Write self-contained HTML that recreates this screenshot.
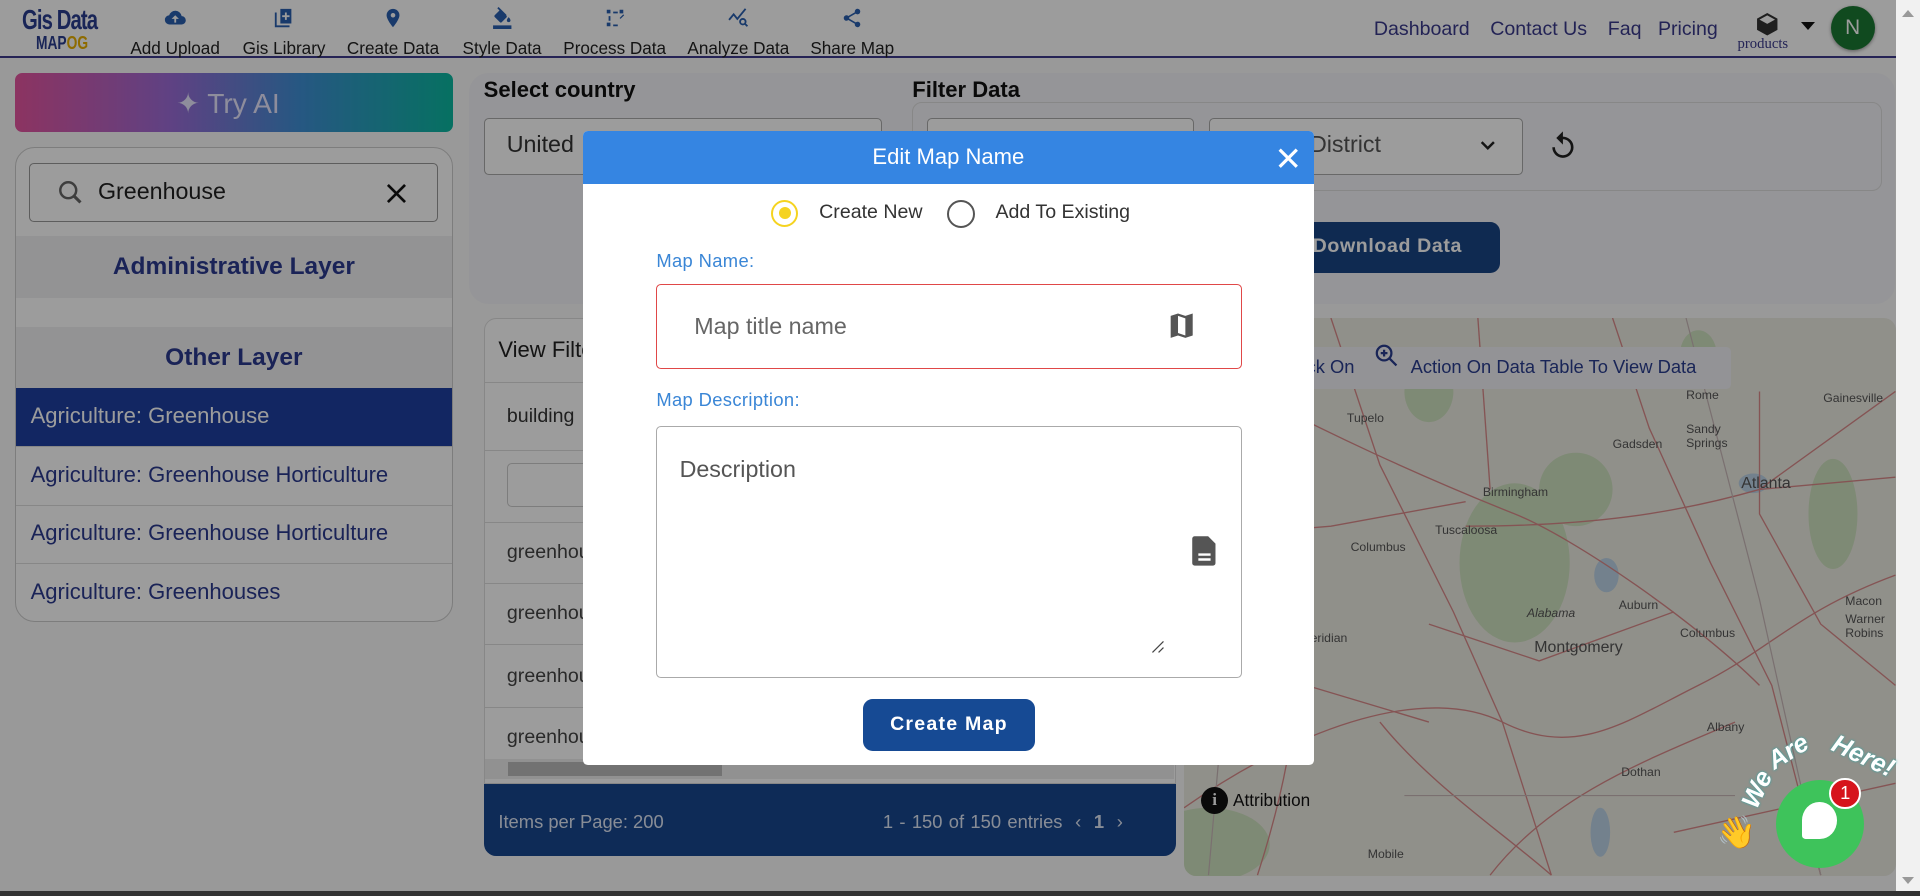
<!DOCTYPE html>
<html><head><meta charset="utf-8">
<style>
*{box-sizing:border-box;margin:0;padding:0}
html,body{width:1920px;height:896px;overflow:hidden;background:#fff;font-family:"Liberation Sans",sans-serif}
#w{zoom:1.22449;width:1568px;height:732px;position:relative;overflow:hidden;background:#fafafa}
.a{position:absolute}
.nav{font-size:14px;color:#222;text-align:center}
.nav span{display:block}
.item{position:absolute;left:13px;width:356px;height:48px;border-bottom:1px solid #ddd;color:#2b3a8f;font-size:18px;padding:12px 12px}
.row{position:absolute;left:396px;width:80px;height:50px;border-bottom:1px solid #ddd;font-size:16px;color:#444;padding:15px 18px}
.city{position:absolute;font-size:10px;color:#555}
.wh{position:absolute;font-size:21px;font-weight:bold;color:#fff;font-style:italic;text-shadow:0 0 2px #2aa;white-space:nowrap;transform-origin:left bottom}
</style></head><body><div id="w">
<!-- header -->
<div class="a" style="left:0;top:0;width:1548px;height:47px;background:#fff;border-bottom:2px solid #3d3a8c"></div>
<div class="a" style="left:18px;top:3px;font-size:23px;font-weight:bold;color:#2a3d8f;letter-spacing:-1px;transform:scaleX(.72);transform-origin:left">Gis Data</div>
<div class="a" style="left:29px;top:26px;font-size:15px;font-weight:bold;color:#2a3d8f;transform:scaleX(.75);transform-origin:left">MAP<span style="color:#e8b000">OG</span></div>
<div class="a nav" style="left:104px;top:6px;width:78px"><svg width="20" height="18" viewBox="0 0 24 24"><path fill="#2a5fb0" d="M19 10a7 7 0 0 0-13.6-1A5 5 0 0 0 6 19h13a4.5 4.5 0 0 0 0-9zm-6 3v4h-2v-4H8l4-4 4 4z"/></svg><span style="margin-top:3px">Add Upload</span></div>
<div class="a nav" style="left:194px;top:6px;width:76px"><svg width="18" height="18" viewBox="0 0 24 24"><path fill="#2a5fb0" d="M4 6H2v16h16v-2H4zm16-4H8v16h12zm-2 9h-3v3h-2v-3h-3V9h3V6h2v3h3z"/></svg><span style="margin-top:3px">Gis Library</span></div>
<div class="a nav" style="left:281px;top:6px;width:80px"><svg width="18" height="18" viewBox="0 0 24 24"><path fill="#2a5fb0" d="M12 2a7 7 0 0 0-7 7c0 5 7 13 7 13s7-8 7-13a7 7 0 0 0-7-7zm0 9.5A2.5 2.5 0 1 1 12 6.5a2.5 2.5 0 0 1 0 5z"/></svg><span style="margin-top:3px">Create Data</span></div>
<div class="a nav" style="left:375px;top:6px;width:70px"><svg width="20" height="18" viewBox="0 0 24 24"><path fill="#2a5fb0" d="M16.5 8.5 8 0 6.6 1.4 9 3.8 3.9 8.9a1.5 1.5 0 0 0 0 2.1l5.5 5.5a1.5 1.5 0 0 0 2.1 0l5-5a1.5 1.5 0 0 0 0-2.1zM19 11s-2 2.2-2 3.5a2 2 0 0 0 4 0C21 13.2 19 11 19 11zM2 20h20v4H2z"/></svg><span style="margin-top:3px">Style Data</span></div>
<div class="a nav" style="left:458px;top:6px;width:88px"><svg width="18" height="18" viewBox="0 0 24 24"><path fill="#2a5fb0" d="M3 3h4v4H3zm14 0h4v4h-4zM3 17h4v4H3zm7-12h5v2h-5zm-5 5h2v5H5zm12 2 4-4 1 1-4 4zm-7 7h5v2h-5z"/></svg><span style="margin-top:3px">Process Data</span></div>
<div class="a nav" style="left:558px;top:6px;width:90px"><svg width="20" height="18" viewBox="0 0 24 24"><path fill="none" stroke="#2a5fb0" stroke-width="2" d="M2 14l5-6 4 5 9-11M14 16a3 3 0 1 0 6 0 3 3 0 0 0-6 0m5 2 3 3"/></svg><span style="margin-top:3px">Analyze Data</span></div>
<div class="a nav" style="left:660px;top:6px;width:72px"><svg width="18" height="18" viewBox="0 0 24 24"><path fill="#2a5fb0" d="M18 16a3 3 0 0 0-2 .8L8.9 12.7a3 3 0 0 0 0-1.4L16 7.2A3 3 0 1 0 15 5a3 3 0 0 0 .1.7L8 9.8a3 3 0 1 0 0 4.4l7.1 4.1a3 3 0 1 0 2.9-2.3z"/></svg><span style="margin-top:3px">Share Map</span></div>
<div class="a" style="left:1122px;top:15px;font-size:16px;color:#3a3a8c">Dashboard</div>
<div class="a" style="left:1217px;top:15px;font-size:16px;color:#3a3a8c">Contact Us</div>
<div class="a" style="left:1313px;top:15px;font-size:16px;color:#3a3a8c">Faq</div>
<div class="a" style="left:1354px;top:15px;font-size:16px;color:#3a3a8c">Pricing</div>
<svg class="a" style="left:1433px;top:10px" width="20" height="20" viewBox="0 0 24 24"><path fill="#333" d="M12 1 2 6.5v11L12 23l10-5.5v-11zM12 3.3l7.6 4.2L12 11.7 4.4 7.5z"/></svg>
<div class="a" style="left:1419px;top:29px;font-size:12px;color:#3a3a8c;font-family:'Liberation Serif',serif">products</div>
<div class="a" style="left:1471px;top:18px;width:0;height:0;border-left:6px solid transparent;border-right:6px solid transparent;border-top:7px solid #111"></div>
<div class="a" style="left:1495px;top:5px;width:36px;height:36px;border-radius:50%;background:#1b7a33;color:#fff;font-size:17px;text-align:center;line-height:36px;box-shadow:0 1px 3px rgba(0,0,0,.4)">N</div>

<!-- left panel -->
<div class="a" style="left:12px;top:60px;width:358px;height:48px;border-radius:6px;background:linear-gradient(90deg,#e5559f,#9d6bd6 35%,#3f8fd5 65%,#0bb8a0)"></div>
<div class="a" style="left:144px;top:71px;font-size:23px;color:#e8e6ff">✦ Try AI</div>
<div class="a" style="left:12px;top:120px;width:358px;height:388px;border:1px solid #ccc;border-radius:16px;background:#fff"></div>
<div class="a" style="left:24px;top:133px;width:334px;height:48px;border:1px solid #999;border-radius:4px"></div>
<svg class="a" style="left:46px;top:145px" width="24" height="24" viewBox="0 0 24 24"><circle cx="10" cy="10" r="6.5" fill="none" stroke="#666" stroke-width="2"/><path d="M15 15l5 5" stroke="#666" stroke-width="2.5"/></svg>
<div class="a" style="left:80px;top:145px;font-size:19px;color:#222">Greenhouse</div>
<svg class="a" style="left:313px;top:147px" width="22" height="22" viewBox="0 0 22 22"><path d="M4 4l14 14M18 4 4 18" stroke="#111" stroke-width="2.2"/></svg>
<div class="a" style="left:13px;top:193px;width:356px;height:50px;background:#f0f0f2;text-align:center;font-size:20px;font-weight:bold;color:#2b3a8f;padding-top:14px">Administrative Layer</div>
<div class="a" style="left:13px;top:267px;width:356px;height:50px;background:#f0f0f2;text-align:center;font-size:20px;font-weight:bold;color:#2b3a8f;padding-top:14px">Other Layer</div>
<div class="item" style="top:317px;background:#1e3fa0;color:#fff">Agriculture: Greenhouse</div>
<div class="item" style="top:365px">Agriculture: Greenhouse Horticulture</div>
<div class="item" style="top:413px">Agriculture: Greenhouse Horticulture</div>
<div class="item" style="top:461px;border:none">Agriculture: Greenhouses</div>

<!-- filters -->
<div class="a" style="left:383px;top:60px;width:1165px;height:188px;background:#f4f4f8;border-radius:16px"></div>
<div class="a" style="left:395px;top:63px;font-size:18px;font-weight:bold;color:#111">Select country</div>
<div class="a" style="left:745px;top:63px;font-size:18px;font-weight:bold;color:#111">Filter Data</div>
<div class="a" style="left:395px;top:96px;width:325px;height:47px;border:1px solid #aaa;border-radius:4px;background:#fff;font-size:19px;color:#333;padding:10px 18px">United</div>
<div class="a" style="left:745px;top:83px;width:792px;height:73px;border:1px solid #ddd;border-radius:8px"></div>
<div class="a" style="left:757px;top:96px;width:218px;height:47px;border:1px solid #aaa;border-radius:4px;background:#fff"></div>
<div class="a" style="left:987px;top:96px;width:257px;height:47px;border:1px solid #aaa;border-radius:4px;background:#fff;font-size:19px;color:#555;padding:10px 18px 0 82px">District</div>
<svg class="a" style="left:1207px;top:111px" width="16" height="16" viewBox="0 0 16 16"><path d="M3 5l5 5 5-5" fill="none" stroke="#222" stroke-width="2"/></svg>
<svg class="a" style="left:1263px;top:106px" width="26" height="26" viewBox="0 0 24 24"><path fill="#222" d="M12 5V1L7 6l5 5V7a6 6 0 1 1-6 6H4a8 8 0 1 0 8-8z"/></svg>
<div class="a" style="left:1040px;top:181px;width:185px;height:42px;border-radius:8px;background:#1a4585;color:#fff;font-size:16px;font-weight:bold;letter-spacing:.5px;padding:11px 0 0 32px">Download Data</div>

<!-- table -->
<div class="a" style="left:395px;top:260px;width:565px;height:380px;background:#fff;border:1px solid #ddd;border-radius:10px 10px 0 0"></div>
<div class="a" style="left:407px;top:275px;font-size:18px;color:#222">View Filtered Data</div>
<div class="a" style="left:396px;top:312px;width:563px;height:56px;border-top:1px solid #ddd;border-bottom:1px solid #ddd;font-size:16px;color:#333;padding:18px 18px">building</div>
<div class="a" style="left:414px;top:378px;width:300px;height:36px;border:1px solid #ccc;border-radius:4px"></div>
<div class="a" style="left:396px;top:426px;width:563px;height:1px;background:#ddd"></div>
<div class="row" style="top:427px">greenhouse</div>
<div class="row" style="top:477px">greenhouse</div>
<div class="row" style="top:528px">greenhouse</div>
<div class="row" style="top:578px;border:none">greenhouse</div>
<div class="a" style="left:396px;top:620px;width:563px;height:16px;background:#eee"></div>
<div class="a" style="left:415px;top:622px;width:175px;height:12px;background:#bbb"></div>
<div class="a" style="left:395px;top:640px;width:565px;height:59px;background:#17478f;border-radius:0 0 10px 10px"></div>
<div class="a" style="left:407px;top:662px;font-size:15px;color:#dfe6f5">Items per Page: 200</div>
<div class="a" style="left:721px;top:662px;font-size:15px;color:#dfe6f5;word-spacing:1px">1 - 150 of 150 entries &nbsp;‹ &nbsp;<b>1</b> &nbsp;›</div>

<!-- map -->
<div class="a" style="left:967px;top:260px;width:581px;height:455px;background:#ecebe2;border-radius:10px;overflow:hidden">
<svg width="581" height="455" style="position:absolute;left:0;top:0">
<g fill="#cfe2bf"><ellipse cx="270" cy="200" rx="45" ry="65"/><ellipse cx="320" cy="140" rx="30" ry="30"/><ellipse cx="530" cy="160" rx="20" ry="45"/><ellipse cx="20" cy="430" rx="50" ry="30"/><ellipse cx="200" cy="60" rx="20" ry="25"/><ellipse cx="420" cy="30" rx="15" ry="20"/></g>
<g fill="#bcd3e6"><ellipse cx="345" cy="210" rx="10" ry="14"/><ellipse cx="465" cy="135" rx="12" ry="8"/><ellipse cx="340" cy="420" rx="8" ry="20"/></g>
<g fill="none" stroke="#d98a8a" stroke-width="1.1"><path d="M0 30 C100 90 220 140 270 160 S420 250 470 300"/><path d="M120 0 L160 120 220 240 260 330 300 455"/><path d="M230 170 C330 170 400 160 470 140 L581 130"/><path d="M0 400 C100 330 200 300 260 330 S360 330 420 300 500 240 581 210"/><path d="M350 0 L380 90 430 200 480 300 520 455"/><path d="M470 60 L470 160 520 250 581 300"/><path d="M50 120 C100 200 110 300 60 455"/><path d="M160 330 C200 380 260 420 300 455"/><path d="M250 455 C300 390 380 360 450 330"/><path d="M0 180 L120 170 230 150"/><path d="M240 0 L250 140"/><path d="M470 140 L581 60"/><path d="M200 250 L290 280 400 240"/><path d="M100 300 L200 330"/><path d="M400 420 L581 380"/></g>
<g fill="none" stroke="#c8b8b8" stroke-width="1"><path d="M60 0 L20 455"/><path d="M410 0 L470 230 520 455"/><path d="M180 390 L450 390"/></g>
</svg>
<div class="city" style="left:133px;top:76px">Tupelo</div><div class="city" style="left:350px;top:97px">Gadsden</div><div class="city" style="left:410px;top:57px">Rome</div><div class="city" style="left:522px;top:59px">Gainesville</div><div class="city" style="left:410px;top:85px">Sandy<br>Springs</div><div class="city" style="left:455px;top:128px;font-size:13px">Atlanta</div><div class="city" style="left:244px;top:136px">Birmingham</div><div class="city" style="left:136px;top:181px">Columbus</div><div class="city" style="left:205px;top:167px">Tuscaloosa</div><div class="city" style="left:280px;top:235px;font-style:italic">Alabama</div><div class="city" style="left:355px;top:228px">Auburn</div><div class="city" style="left:405px;top:251px">Columbus</div><div class="city" style="left:286px;top:262px;font-size:13px">Montgomery</div><div class="city" style="left:540px;top:225px">Macon</div><div class="city" style="left:540px;top:240px">Warner<br>Robins</div><div class="city" style="left:357px;top:365px">Dothan</div><div class="city" style="left:427px;top:328px">Albany</div><div class="city" style="left:150px;top:432px">Mobile</div><div class="city" style="left:95px;top:255px">Meridian</div>
<div class="a" style="left:100px;top:23px;width:347px;height:35px;background:#f1f1f6;border-radius:4px"></div>
<div class="a" style="left:100px;top:31px;font-size:15px;color:#2a3d8f">ck On</div>
<svg class="a" style="left:155px;top:20px" width="22" height="22" viewBox="0 0 24 24"><circle cx="9" cy="9" r="6.5" fill="none" stroke="#2a3d8f" stroke-width="2"/><path d="M14 14l6 6M9 6v6M6 9h6" stroke="#2a3d8f" stroke-width="2"/></svg>
<div class="a" style="left:185px;top:31px;font-size:15px;color:#2a3d8f">Action On Data Table To View Data</div>
<div class="a" style="left:14px;top:383px;width:22px;height:22px;border-radius:50%;background:#111;color:#fff;font-weight:bold;font-size:14px;text-align:center;line-height:22px;font-family:'Liberation Serif',serif">i</div>
<div class="a" style="left:40px;top:385px;font-size:14px;color:#111">Attribution</div>
</div>
<!-- page scrollbar -->
<div class="a" style="left:1548px;top:0;width:20px;height:732px;background:#f1f1f1"></div>

<!-- overlay -->
<div class="a" style="left:0;top:0;width:1548px;height:728px;background:rgba(0,0,0,.39)"></div>
<div class="a" style="left:0;top:728px;width:1568px;height:4px;background:#333"></div>
<div class="a" style="left:1553px;top:8px;width:0;height:0;border-left:5px solid transparent;border-right:5px solid transparent;border-bottom:6px solid #999"></div>
<div class="a" style="left:1553px;top:716px;width:0;height:0;border-left:5px solid transparent;border-right:5px solid transparent;border-top:6px solid #999"></div>

<!-- chat widget -->
<div class="a" style="left:1450px;top:637px;width:72px;height:72px;border-radius:50%;background:#3ec35b"></div>
<div class="a" style="left:1472px;top:655px;width:28px;height:30px;border-radius:50% 50% 50% 10%;background:#fff"></div>
<div class="a" style="left:1494px;top:635px;width:26px;height:26px;border-radius:50%;background:#d6141c;color:#fff;font-size:15px;text-align:center;line-height:22px;border:2px solid #fff">1</div>
<div class="wh" style="left:1440px;top:640px;transform:rotate(-65deg)">We</div>
<div class="wh" style="left:1452px;top:610px;transform:rotate(-32deg)">Are</div>
<div class="wh" style="left:1492px;top:594px;transform:rotate(25deg)">Here!</div>
<div class="a" style="left:1402px;top:664px;font-size:26px">👋</div>

<!-- modal -->
<div class="a" style="left:476px;top:107px;width:597px;height:518px;background:#fff;border-radius:4px;overflow:hidden">
<div style="height:43px;background:#3585e2;color:#fff;font-size:18px;text-align:center;line-height:43px">Edit Map Name</div>
<svg class="a" style="left:566px;top:12px" width="20" height="20" viewBox="0 0 20 20"><path d="M3 3l14 14M17 3 3 17" stroke="#fff" stroke-width="2.6"/></svg>
<div class="a" style="left:154px;top:56px;width:22px;height:22px;border-radius:50%;border:2px solid #f5d320"></div>
<div class="a" style="left:160px;top:62px;width:10px;height:10px;border-radius:50%;background:#f5d320"></div>
<div class="a" style="left:193px;top:57px;font-size:16px;color:#333">Create New</div>
<div class="a" style="left:297px;top:56px;width:23px;height:23px;border-radius:50%;border:2px solid #555"></div>
<div class="a" style="left:337px;top:57px;font-size:16px;color:#333">Add To Existing</div>
<div class="a" style="left:60px;top:97px;font-size:15px;color:#3a86d6;letter-spacing:.3px">Map Name:</div>
<div class="a" style="left:60px;top:125px;width:478px;height:69px;border:1px solid #e04848;border-radius:4px"></div>
<div class="a" style="left:91px;top:149px;font-size:19px;color:#666">Map title name</div>
<svg class="a" style="left:477px;top:147px" width="24" height="24" viewBox="0 0 24 24"><path fill="#555" fill-rule="evenodd" d="M3 4l6-2 6 2 6-2v18l-6 2-6-2-6 2zm6 0v14l6 2V6z"/></svg>
<div class="a" style="left:60px;top:211px;font-size:15px;color:#3a86d6;letter-spacing:.3px">Map Description:</div>
<div class="a" style="left:60px;top:241px;width:478px;height:206px;border:1px solid #aaa;border-radius:4px"></div>
<div class="a" style="left:79px;top:265px;font-size:19px;color:#555">Description</div>
<svg class="a" style="left:497px;top:330px" width="22" height="26" viewBox="0 0 22 26"><path fill="#555" d="M3 1h11l6 6v16a2 2 0 0 1-2 2H3a2 2 0 0 1-2-2V3a2 2 0 0 1 2-2zm3 14v2h10v-2zm0 4v2h10v-2z"/></svg>
<svg class="a" style="left:463px;top:415px" width="12" height="12" viewBox="0 0 12 12"><path d="M2 11 11 2M7 11l4-4" stroke="#444" stroke-width="1"/></svg>
<div class="a" style="left:229px;top:464px;width:140px;height:42px;border-radius:8px;background:#164a94;color:#fff;font-size:16px;font-weight:bold;letter-spacing:1px;text-align:center;line-height:42px">Create Map</div>
</div>
</div></body></html>
